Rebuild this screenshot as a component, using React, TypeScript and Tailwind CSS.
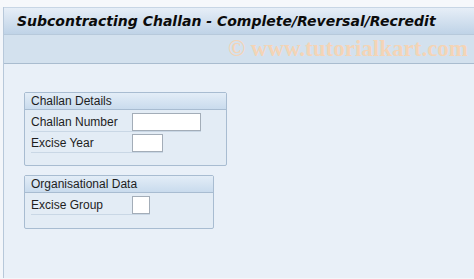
import React from 'react';

const font = { fontFamily: 'Tahoma, "DejaVu Sans", sans-serif' };
const labelFont = { fontFamily: '"Liberation Sans", Arial, sans-serif' };

function Field({ label, width }: { label: string; width: string }) {
  return (
    <div className="flex items-center w-fit h-[19px] ml-[6px] border-b border-[#c9d7e5]">
      <span
        className="w-[101px] shrink-0 whitespace-nowrap text-[12px] text-[#1d1d1d] leading-none"
        style={labelFont}
      >
        {label}
      </span>
      <div className={`${width} h-[18px] bg-white border border-[#a3adb8]`} />
    </div>
  );
}

function Group({ title, width, children }: { title: string; width: string; children: React.ReactNode }) {
  return (
    <div className={`${width} border border-[#a8bcd1] rounded-[2px] bg-[#e3ecf5]`}>
      <div
        className="h-[17px] flex items-center pl-[6px] text-[12px] text-[#1d1d1d] bg-gradient-to-b from-[#e3edf7] to-[#c9dbed] border-b border-[#a8bcd1] leading-none"
        style={labelFont}
      >
        {title}
      </div>
      <div className="flex flex-col gap-[2px] pt-[3px]">{children}</div>
    </div>
  );
}

export default function App() {
  return (
    <div className="w-[474px] h-[279px] bg-[#f3f6fa] overflow-hidden" style={font}>
      <div className="h-[7px] bg-[#f6f8fb]" />
      <div className="ml-[3px] border-l border-[#b7c8da]">
        <div className="h-[27px] flex items-center pl-[13px] bg-gradient-to-b from-[#e6eef7] to-[#bfd3e7] border-t border-[#c8d6e5]">
          <span className="text-[14px] font-bold italic text-[#0b0b0b]">
            Subcontracting Challan - Complete/Reversal/Recredit
          </span>
        </div>
        <div className="h-[30px] flex items-center justify-end pr-[6px] bg-[#d3e1ee] border-t border-[#b7c9db] border-b border-b-[#a9bccf]">
          <span
            className="text-[23px] font-bold text-[#f4d4b6]"
            style={{ fontFamily: '"Liberation Serif", serif' }}
          >
            © www.tutorialkart.com
          </span>
        </div>
        <div className="h-[214px] bg-[#e9f0f8] pt-[28px] pl-[20px] flex flex-col gap-[9px]">
          <Group title="Challan Details" width="w-[203px]">
            <Field label="Challan Number" width="w-[69px]" />
            <Field label="Excise Year" width="w-[31px]" />
            <div className="h-[10px]" />
          </Group>
          <Group title="Organisational Data" width="w-[190px]">
            <Field label="Excise Group" width="w-[18px]" />
            <div className="h-[11px]" />
          </Group>
        </div>
      </div>
    </div>
  );
}
